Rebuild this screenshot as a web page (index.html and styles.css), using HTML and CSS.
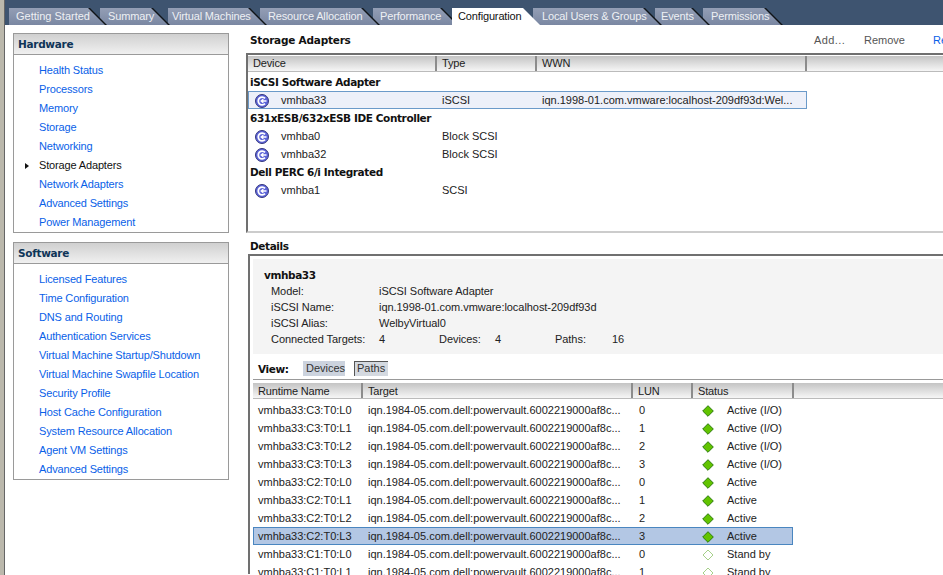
FILE: index.html
```html
<!DOCTYPE html>
<html lang="en">
<head>
<meta charset="utf-8">
<title>Storage Adapters</title>
<link rel="stylesheet" href="styles.css">
</head>
<body>
<div class="frame">
<nav class="tabbar">
  <a class="tab t1">Getting Started</a>
  <a class="tab t2">Summary</a>
  <a class="tab t3">Virtual Machines</a>
  <a class="tab t4">Resource Allocation</a>
  <a class="tab t5">Performance</a>
  <a class="tab active t6">Configuration</a>
  <a class="tab t7">Local Users &amp; Groups</a>
  <a class="tab t8">Events</a>
  <a class="tab t9">Permissions</a>
</nav>
<div class="content">
  <aside class="side">
    <section class="box hw">
      <h2 class="box-title">Hardware</h2>
      <ul class="links">
        <li>Health Status</li><li>Processors</li><li>Memory</li><li>Storage</li><li>Networking</li>
        <li class="current">Storage Adapters</li>
        <li>Network Adapters</li><li>Advanced Settings</li><li>Power Management</li>
      </ul>
    </section>
    <section class="box sw">
      <h2 class="box-title">Software</h2>
      <ul class="links">
        <li>Licensed Features</li><li>Time Configuration</li><li>DNS and Routing</li><li>Authentication Services</li>
        <li>Virtual Machine Startup/Shutdown</li><li>Virtual Machine Swapfile Location</li><li>Security Profile</li>
        <li>Host Cache Configuration</li><li>System Resource Allocation</li><li>Agent VM Settings</li><li>Advanced Settings</li>
      </ul>
    </section>
  </aside>
  <main class="main">
    <div class="title-row">
      <h1 class="heading">Storage Adapters</h1>
      <div class="actions"><span class="act a-add">Add...</span><span class="act a-rem">Remove</span><span class="act a-ref">Refresh</span></div>
    </div>
    <section class="adapters">
      <div class="thead ad-grid">
        <span class="th">Device</span><span class="th">Type</span><span class="th">WWN</span><span class="th"></span>
      </div>
      <div class="group">iSCSI Software Adapter</div>
      <div class="ad-row ad-grid selected">
        <span class="dev"><svg class="hba" viewBox="0 0 14 14"><use href="#hba"/></svg>vmhba33</span><span>iSCSI</span><span>iqn.1998-01.com.vmware:localhost-209df93d:Wel...</span>
      </div>
      <div class="group">631xESB/632xESB IDE Controller</div>
      <div class="ad-row ad-grid">
        <span class="dev"><svg class="hba" viewBox="0 0 14 14"><use href="#hba"/></svg>vmhba0</span><span>Block SCSI</span><span></span>
      </div>
      <div class="ad-row ad-grid">
        <span class="dev"><svg class="hba" viewBox="0 0 14 14"><use href="#hba"/></svg>vmhba32</span><span>Block SCSI</span><span></span>
      </div>
      <div class="group">Dell PERC 6/i Integrated</div>
      <div class="ad-row ad-grid">
        <span class="dev"><svg class="hba" viewBox="0 0 14 14"><use href="#hba"/></svg>vmhba1</span><span>SCSI</span><span></span>
      </div>
    </section>
    <h1 class="heading details-h">Details</h1>
    <section class="details">
      <div class="summary">
        <div class="name">vmhba33</div>
        <div class="kv"><span class="k">Model:</span><span>iSCSI Software Adapter</span></div>
        <div class="kv"><span class="k">iSCSI Name:</span><span>iqn.1998-01.com.vmware:localhost-209df93d</span></div>
        <div class="kv"><span class="k">iSCSI Alias:</span><span>WelbyVirtual0</span></div>
        <div class="kv"><span class="k">Connected Targets:</span><span class="v1">4</span><span class="k2">Devices:</span><span class="v2">4</span><span class="k3">Paths:</span><span>16</span></div>
      </div>
      <div class="view"><b class="view-l">View:</b><span class="btn">Devices</span><span class="btn on">Paths</span></div>
      <div class="paths">
        <div class="thead p-grid"><span class="th">Runtime Name</span><span class="th">Target</span><span class="th">LUN</span><span class="th">Status</span><span class="th"></span></div>
        <div class="p-row p-grid"><span>vmhba33:C3:T0:L0</span><span>iqn.1984-05.com.dell:powervault.6002219000af8c...</span><span class="lun">0</span><span class="st"><svg class="dia" viewBox="0 0 12 12"><use href="#on"/></svg>Active (I/O)</span></div>
        <div class="p-row p-grid"><span>vmhba33:C3:T0:L1</span><span>iqn.1984-05.com.dell:powervault.6002219000af8c...</span><span class="lun">1</span><span class="st"><svg class="dia" viewBox="0 0 12 12"><use href="#on"/></svg>Active (I/O)</span></div>
        <div class="p-row p-grid"><span>vmhba33:C3:T0:L2</span><span>iqn.1984-05.com.dell:powervault.6002219000af8c...</span><span class="lun">2</span><span class="st"><svg class="dia" viewBox="0 0 12 12"><use href="#on"/></svg>Active (I/O)</span></div>
        <div class="p-row p-grid"><span>vmhba33:C3:T0:L3</span><span>iqn.1984-05.com.dell:powervault.6002219000af8c...</span><span class="lun">3</span><span class="st"><svg class="dia" viewBox="0 0 12 12"><use href="#on"/></svg>Active (I/O)</span></div>
        <div class="p-row p-grid"><span>vmhba33:C2:T0:L0</span><span>iqn.1984-05.com.dell:powervault.6002219000af8c...</span><span class="lun">0</span><span class="st"><svg class="dia" viewBox="0 0 12 12"><use href="#on"/></svg>Active</span></div>
        <div class="p-row p-grid"><span>vmhba33:C2:T0:L1</span><span>iqn.1984-05.com.dell:powervault.6002219000af8c...</span><span class="lun">1</span><span class="st"><svg class="dia" viewBox="0 0 12 12"><use href="#on"/></svg>Active</span></div>
        <div class="p-row p-grid"><span>vmhba33:C2:T0:L2</span><span>iqn.1984-05.com.dell:powervault.6002219000af8c...</span><span class="lun">2</span><span class="st"><svg class="dia" viewBox="0 0 12 12"><use href="#on"/></svg>Active</span></div>
        <div class="p-row p-grid hl"><span>vmhba33:C2:T0:L3</span><span>iqn.1984-05.com.dell:powervault.6002219000af8c...</span><span class="lun">3</span><span class="st"><svg class="dia" viewBox="0 0 12 12"><use href="#on"/></svg>Active</span></div>
        <div class="p-row p-grid"><span>vmhba33:C1:T0:L0</span><span>iqn.1984-05.com.dell:powervault.6002219000af8c...</span><span class="lun">0</span><span class="st"><svg class="dia" viewBox="0 0 12 12"><use href="#off"/></svg>Stand by</span></div>
        <div class="p-row p-grid"><span>vmhba33:C1:T0:L1</span><span>iqn.1984-05.com.dell:powervault.6002219000af8c...</span><span class="lun">1</span><span class="st"><svg class="dia" viewBox="0 0 12 12"><use href="#off"/></svg>Stand by</span></div>
      </div>
    </section>
  </main>
</div>
</div>
<svg class="defs" width="0" height="0" aria-hidden="true">
  <symbol id="hba" viewBox="0 0 14 14">
    <circle cx="7" cy="7" r="6.5" fill="#5d64d8" stroke="#34377e"/>
    <path d="M10 4.3A3.9 3.9 0 1 0 10 9.7" fill="none" stroke="#fff" stroke-width="1.8"/>
    <path d="M11.5 7H6.5M8.3 5.2 6.2 7 8.3 8.8" fill="none" stroke="#fff" stroke-width="1.4"/>
  </symbol>
  <symbol id="on" viewBox="0 0 12 12">
    <path d="M6 .7 11.3 6 6 11.3.7 6Z" fill="#62c400" stroke="#2b7a0b"/>
  </symbol>
  <symbol id="off" viewBox="0 0 12 12">
    <path d="M6 1 11 6 6 11 1 6Z" fill="#fff" stroke="#a6d08a"/>
  </symbol>
</svg>
</body>
</html>
```
FILE: styles.css
```css
* { box-sizing: border-box; }
html, body { margin: 0; height: 100%; overflow: hidden; background: #fff; }
body { font: 11px/18px "Liberation Sans", Tahoma, sans-serif; color: #222; }
.frame { height: 575px; width: 943px; overflow: hidden; padding-left: 5px; background: linear-gradient(90deg, #bbb8ac 4px, #666 4px, #666 5px, #fff 5px); }
.tabbar { height: 25px; background: #3e5470; display: flex; padding: 8px 0 0 4px; }
.tab { position: relative; height: 17px; line-height: 17px; letter-spacing: -0.15px; color: #eef0f4; background: #101418; clip-path: polygon(0 0, calc(100% - 17px) 0, 100% 100%, 0 100%); white-space: nowrap; }
.tab::before { content: ""; position: absolute; inset: 0; z-index: -1; background: linear-gradient(#939eb5, #7a87a2); clip-path: polygon(0 0, calc(100% - 19px) 0, calc(100% - 2px) 100%, 0 100%); }
.tab.active { color: #111; background: #fff; }
.tab.active::before { background: #fff; }
.t1 { width: 98px; margin-right: -7px; padding-left: 7px; z-index: 9; letter-spacing: 0; }
.t2 { width: 70px; margin-right: -2px; padding-left: 8px; z-index: 8; }
.t3 { width: 99px; margin-right: -7px; padding-left: 4px; z-index: 7; }
.t4 { width: 120px; margin-right: -7px; padding-left: 8px; z-index: 6; }
.t5 { width: 86px; margin-right: -7px; padding-left: 7px; z-index: 5; }
.t6 { width: 88px; margin-right: -7px; padding-left: 6px; z-index: 10; }
.t7 { width: 129px; margin-right: -7px; padding-left: 9px; z-index: 4; }
.t8 { width: 55px; margin-right: -7px; padding-left: 6px; z-index: 3; }
.t9 { width: 80px; padding-left: 8px; z-index: 2; }
.content { display: flex; }
.side { width: 216px; margin: 8px 0 0 8px; flex: none; }
.box { border: 1px solid #9a9a9a; }
.sw { margin-top: 9px; }
.box-title { margin: 0; height: 21px; font: 700 10.5px/20px "DejaVu Sans", sans-serif; letter-spacing: -0.3px; padding-left: 4px; color: #0f3558; background: linear-gradient(#d0d0d0, #f0f0f0); border-bottom: 1px solid #9a9a9a; }
.links { list-style: none; margin: 0; padding: 5px 0 1px 25px; }
.links li { height: 19px; line-height: 20px; letter-spacing: -0.15px; color: #0a5fe8; position: relative; }
.links .current { color: #111; }
.current::before { content: ""; position: absolute; left: -14px; top: 8px; border: 3px solid transparent; border-left: 4px solid #111; border-right: 0; }
.main { margin-left: 17px; width: 697px; flex: none; }
.title-row { display: flex; height: 28px; padding-top: 1px; align-items: center; }
.heading { margin: 0 0 0 4px; font: 700 10.5px/18px "DejaVu Sans", sans-serif; letter-spacing: -0.4px; color: #111; }
.title-row .heading { letter-spacing: -0.22px; }
.actions { display: flex; color: #555; width: 129px; flex: none; margin-left: auto; white-space: nowrap; }
.act { flex: none; }
.a-add { width: 50px; letter-spacing: 0.4px; } .a-rem { width: 69px; } .a-ref { color: #0a5fe8; }
.adapters { height: 180px; border: 2px solid #707070; border-bottom: 2px solid #ccc; border-right: 0; padding: 1px 0 0 0; }
.thead { height: 16px; background: linear-gradient(#c4c4c4, #f6f6f6); border-bottom: 1px solid #bbb; line-height: 14px; letter-spacing: -0.15px; }
.th { padding-left: 5px; border-right: 2px solid #8c8c8c; display: block; overflow: hidden; white-space: nowrap; height: 15px; }
.th:last-child { border-right: 0; }
.ad-grid { display: grid; grid-template-columns: 189px 100px 270px 1fr; }
.group { height: 18px; font: 700 10.5px/20px "DejaVu Sans", sans-serif; letter-spacing: -0.4px; color: #111; padding-left: 2px; }
.ad-row { height: 18px; line-height: 21px; color: #222; }
.ad-row > span { padding-left: 5px; white-space: nowrap; }
.ad-row .dev { display: flex; align-items: center; padding-left: 7px; }
.ad-row.selected { width: 559px; margin: 1px 0 -1px; line-height: 19px; grid-template-columns: 189px 100px 1fr; background: #edf0f9; outline: 1px solid #6b9ac9; outline-offset: -1px; }
.hba { width: 14px; height: 14px; margin-right: 12px; flex: none; }
.details-h { margin-top: 2px; height: 19px; line-height: 22px; }
.details { margin-left: 2px; border: 2px solid #707070; border-right: 0; border-bottom: 0; height: 320px; padding: 3px 0 0 3px; }
.summary { background: #f4f4f4; height: 95px; padding: 6px 0 0 11px; }
.name { font: 700 10.5px/20px "DejaVu Sans", sans-serif; letter-spacing: -0.4px; color: #111; height: 18px; }
.kv { display: flex; height: 16px; padding-left: 7px; line-height: 16px; letter-spacing: -0.05px; }
.k { width: 108px; flex: none; }
.v1 { width: 60px; } .k2 { width: 56px; } .v2 { width: 60px; } .k3 { width: 57px; }
.view { display: flex; align-items: center; height: 25px; padding: 4px 0 0 5px; }
.view-l { width: 45px; color: #111; font: 700 10.5px/18px "DejaVu Sans", sans-serif; letter-spacing: -0.4px; }
.btn { height: 15px; line-height: 15px; padding: 0 3px; background: #ccd3de; margin-right: 9px; color: #333; width: 42px; }
.btn.on { background: #d4d9e0; border-left: 1px solid #555; border-top: 1px solid #555; padding-left: 2px; width: 34px; line-height: 13px; }
.paths { border-top: 1px solid #999; padding-top: 3px; }
.paths .thead { margin-bottom: 2px; line-height: 16px; }
.p-grid { display: grid; grid-template-columns: 110px 270px 60px 101px 1fr; }
.p-row { height: 18px; line-height: 19px; color: #222; width: 540px; grid-template-columns: 110px 270px 60px 1fr; }
.p-row > span { padding-left: 5px; white-space: nowrap; }
.p-row .lun { padding-left: 6px; }
.p-row .st { display: flex; align-items: center; padding-left: 9px; }
.dia { width: 12px; height: 12px; margin-right: 13px; flex: none; }
.hl { background: #b3c7e4; outline: 1px solid #4a86c0; outline-offset: -1px; }
.defs { position: absolute; }
```
